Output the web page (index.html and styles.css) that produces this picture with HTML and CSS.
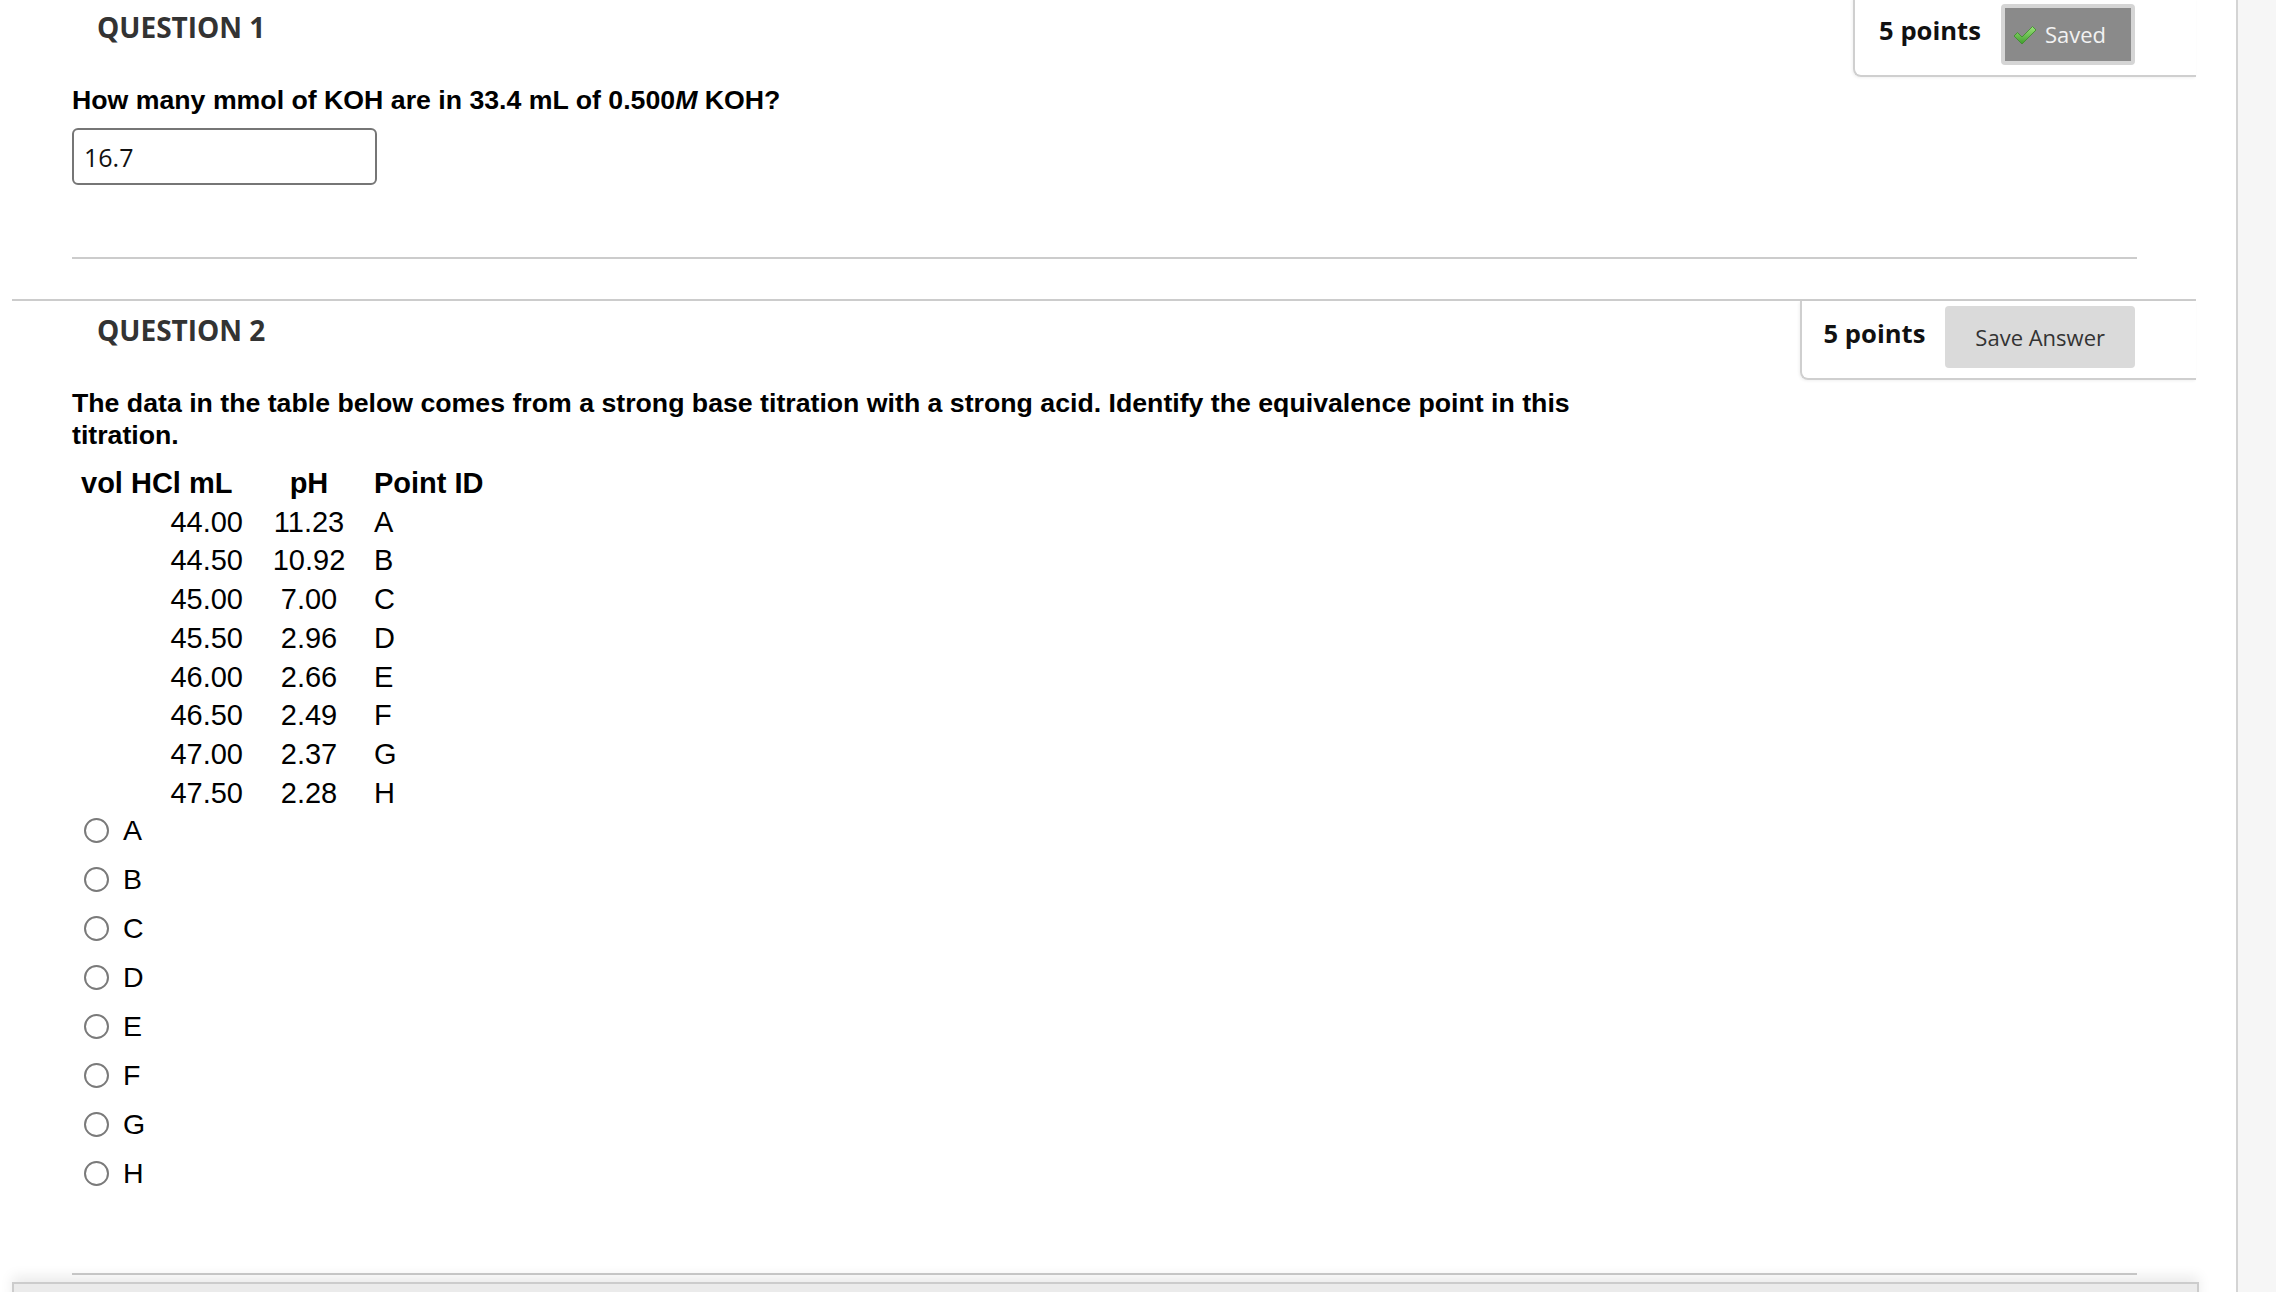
FILE: index.html
```html
<!DOCTYPE html>
<html lang="en">
<head>
<meta charset="utf-8">
<title>Questions</title>
<link rel="stylesheet" href="styles.css">
</head>
<body>
<div class="page">
  <section class="question first">
    <div class="q-head">
      <h2 class="q-title">QUESTION 1</h2>
      <div class="points-box">
        <span class="points">5 points</span>
        <button class="btn saved" type="button">
          <svg class="check" width="24" height="20" viewBox="0 0 24 20" aria-hidden="true">
            <defs>
              <linearGradient id="cg" x1="0" y1="0" x2="0" y2="1">
                <stop offset="0" stop-color="#9be27a"/>
                <stop offset="1" stop-color="#3f9e2c"/>
              </linearGradient>
            </defs>
            <path d="M1 11 L4.5 7.5 L9 12 L19.5 1.5 L23 5 L9 19 Z" fill="url(#cg)" stroke="#3b8a2a" stroke-width="0.8" stroke-linejoin="round"/>
          </svg>
          <span>Saved</span>
        </button>
      </div>
    </div>
    <div class="q-body">
      <p class="q-text">How many mmol of KOH are in 33.4 mL of 0.500<i>M</i> KOH?</p>
      <input class="answer" type="text" value="16.7">
      <div class="rule"></div>
    </div>
  </section>

  <section class="question">
    <div class="q-head">
      <h2 class="q-title">QUESTION 2</h2>
      <div class="points-box">
        <span class="points">5 points</span>
        <button class="btn save" type="button">Save Answer</button>
      </div>
    </div>
    <div class="q-body">
      <p class="q-text wide">The data in the table below comes from a strong base titration with a strong acid. Identify the equivalence point in this titration.</p>
      <table class="data">
        <thead>
          <tr><th class="h1">vol HCl mL</th><th class="c2">pH</th><th class="c3">Point ID</th></tr>
        </thead>
        <tbody>
          <tr><td class="c1">44.00</td><td class="c2">11.23</td><td class="c3">A</td></tr>
          <tr><td class="c1">44.50</td><td class="c2">10.92</td><td class="c3">B</td></tr>
          <tr><td class="c1">45.00</td><td class="c2">7.00</td><td class="c3">C</td></tr>
          <tr><td class="c1">45.50</td><td class="c2">2.96</td><td class="c3">D</td></tr>
          <tr><td class="c1">46.00</td><td class="c2">2.66</td><td class="c3">E</td></tr>
          <tr><td class="c1">46.50</td><td class="c2">2.49</td><td class="c3">F</td></tr>
          <tr><td class="c1">47.00</td><td class="c2">2.37</td><td class="c3">G</td></tr>
          <tr><td class="c1">47.50</td><td class="c2">2.28</td><td class="c3">H</td></tr>
        </tbody>
      </table>
      <ul class="choices">
        <li><span class="radio"></span><span class="lbl">A</span></li>
        <li><span class="radio"></span><span class="lbl">B</span></li>
        <li><span class="radio"></span><span class="lbl">C</span></li>
        <li><span class="radio"></span><span class="lbl">D</span></li>
        <li><span class="radio"></span><span class="lbl">E</span></li>
        <li><span class="radio"></span><span class="lbl">F</span></li>
        <li><span class="radio"></span><span class="lbl">G</span></li>
        <li><span class="radio"></span><span class="lbl">H</span></li>
      </ul>
      <div class="rule bottom"></div>
    </div>
  </section>
  <div class="panel"></div>
</div>
<div class="track"></div>
</body>
</html>
```

FILE: styles.css
```css
html, body {
  margin: 0;
  height: 100%;
  overflow: hidden;
  background: #ffffff;
}

body {
  display: flex;
  font-family: "Liberation Sans", Arial, sans-serif;
  color: #000;
}

.page {
  flex: 1;
  padding: 0 40px 0 12px;
  min-width: 0;
}

.track {
  width: 38px;
  flex: none;
  border-left: 2px solid #d4d4d4;
  background: #f6f6f6;
}

.question {
  border-top: 2px solid #cccccc;
}

.question.first {
  margin-top: -4px;
}

.q-head {
  display: flex;
  justify-content: space-between;
  align-items: flex-start;
}

.q-title {
  margin: 0;
  padding: 9px 0 0 85px;
  font-family: "Open Sans", sans-serif;
  font-weight: 700;
  font-size: 28px;
  line-height: 40px;
  color: #333333;
}

.points-box {
  box-sizing: border-box;
  height: 79px;
  display: flex;
  align-items: center;
  gap: 20px;
  padding: 5px 61px 10px 22px;
  border-left: 2px solid #cfcfcf;
  border-bottom: 2px solid #cfcfcf;
  border-bottom-left-radius: 8px;
  box-shadow: -1px 1px 3px rgba(0, 0, 0, 0.06);
}

.first .points-box {
  padding-left: 24px;
}

.points {
  font-family: "Open Sans", sans-serif;
  font-weight: 700;
  font-size: 25.6px;
  color: #111;
  padding-bottom: 8px;
}

.btn {
  font-family: "Open Sans", sans-serif;
  font-size: 22px;
  border-radius: 4px;
  cursor: pointer;
}

.btn.saved {
  box-sizing: border-box;
  height: 61px;
  display: flex;
  align-items: center;
  gap: 8px;
  padding: 0 25px 0 8px;
  background: #8a8a8a;
  border: 4px solid #d5d5d5;
  color: #f2f2f2;
}

.check {
  display: block;
  margin-top: 2px;
}

.btn.save {
  box-sizing: border-box;
  height: 62px;
  padding: 0 30px;
  background: #dadada;
  border: none;
  color: #333333;
}

.q-body {
  padding: 0 59px 0 60px;
}

.q-text {
  margin: 7px 0 0;
  font-weight: 700;
  font-size: 26.7px;
  line-height: 32px;
  max-width: 1540px;
}

.answer {
  display: block;
  box-sizing: border-box;
  margin-top: 12px;
  width: 305px;
  height: 57px;
  padding: 0 10px;
  border: 2px solid #767676;
  border-radius: 6px;
  font-family: "Open Sans", sans-serif;
  font-size: 25px;
  color: #111;
  background: #fff;
}

.rule {
  height: 2px;
  background: #cccccc;
  margin: 72px 0 40px;
}

.rule.bottom {
  margin: 83px 0 7px;
}

.data {
  margin-top: 13px;
  border-collapse: collapse;
  font-size: 29px;
}

.data th, .data td {
  padding: 0;
  height: 38.7px;
  line-height: 38.7px;
  white-space: nowrap;
}

.data th {
  font-weight: 700;
}

.data .c1 {
  width: 171px;
  text-align: right;
  padding-right: 7px;
}

.data .h1 {
  width: 169px;
  text-align: left;
  padding-left: 9px;
}

.data .c2 {
  width: 118px;
  text-align: center;
}

.data .c3 {
  text-align: left;
  padding-left: 6px;
}

.choices {
  list-style: none;
  margin: 1px 0 0;
  padding: 0;
  display: flex;
  flex-direction: column;
  gap: 15px;
}

.choices li {
  height: 34px;
  display: flex;
  align-items: center;
}

.radio {
  box-sizing: border-box;
  width: 25px;
  height: 25px;
  margin-left: 12px;
  border: 2px solid #7a7a7a;
  border-radius: 50%;
  background: #fff;
}

.lbl {
  margin-left: 14px;
  font-size: 28.5px;
}

.panel {
  height: 40px;
  margin-right: -3px;
  background: #ebebeb;
  border: 2px solid #cccccc;
  box-shadow: 0 -6px 12px rgba(0, 0, 0, 0.08);
}
```
